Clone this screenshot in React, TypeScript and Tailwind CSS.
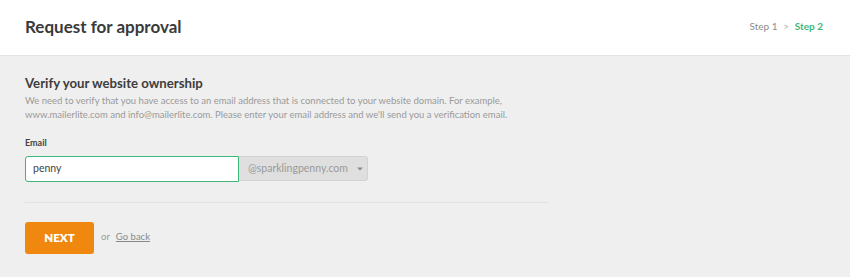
import React from "react";

export default function App() {
  return (
    <div className="w-[850px] h-[277px] bg-[#efefef] overflow-hidden" style={{ fontFamily: "Lato, 'Open Sans', Arial, sans-serif" }}>
      <div className="h-[56px] bg-white border-b border-[#e3e3e3] flex items-center justify-between pl-[25px] pr-[27px]">
        <h1 className="text-[17px] font-bold text-[#3a3a3a] -mt-[1px]">Request for approval</h1>
        <div className="flex items-center text-[10px] -mt-[2px]">
          <span className="text-[#8d8d8d]">Step 1</span>
          <span className="text-[#aaa] mx-[6px] text-[9px]">&gt;</span>
          <span className="text-[#3fb67a] font-bold">Step 2</span>
        </div>
      </div>
      <div className="pl-[25px] pt-[18px]">
        <h2 className="text-[13.2px] font-bold text-[#3d3d3d] leading-[18px]">Verify your website ownership</h2>
        <p className="mt-[2px] text-[9.5px] leading-[14px] text-[#9a9a9a] w-[520px]">
          We need to verify that you have access to an email address that is connected to your website domain. For example,<br />www.mailerlite.com and info@mailerlite.com. Please enter your email address and we'll send you a verification email.
        </p>
        <div className="mt-[14px] text-[9px] font-bold text-[#444]">Email</div>
        <div className="mt-[6px] flex items-stretch">
          <div className="w-[214px] h-[26px] bg-white border-[1.5px] border-[#3fb67a] rounded-l-[3px] flex items-center pl-[7px] text-[10.5px] text-[#444]">
            penny
          </div>
          <div className="w-[129px] h-[25px] mt-[0.5px] bg-[#dfdfdf] border border-[#d3d3d3] border-l-0 rounded-r-[3px] flex items-center pl-[9px] text-[10.5px] text-[#9a9a9a]">
            @sparklingpenny.com
            <svg width="6" height="4" viewBox="0 0 6 4" className="ml-[9px]">
              <path d="M0 0.5h6L3 3.5z" fill="#8a8a8a" />
            </svg>
          </div>
        </div>
        <div className="mt-[20px] w-[524px] h-px bg-[#e2e2e2]" />
        <div className="mt-[19px] flex items-center">
          <button className="w-[69px] h-[32px] bg-[#f0870f] rounded-[3px] text-white font-extrabold text-[11.5px]">NEXT</button>
          <span className="ml-[7px] text-[9.5px] text-[#9a9a9a]">or</span>
          <span className="ml-[6px] text-[9.5px] text-[#8a8a8a] underline">Go back</span>
        </div>
      </div>
    </div>
  );
}
